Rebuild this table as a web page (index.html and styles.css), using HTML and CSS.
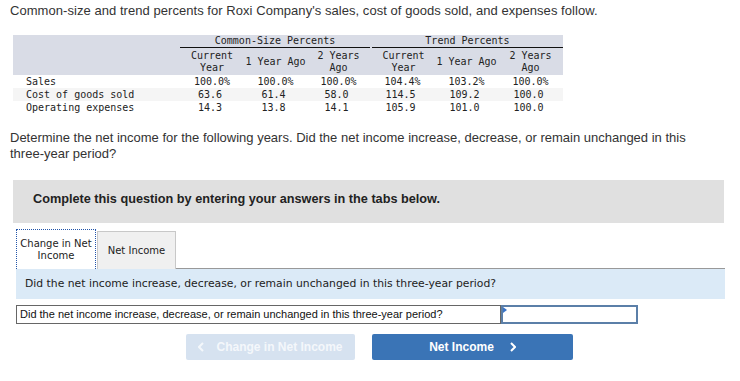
FILE: index.html
```html
<!DOCTYPE html>
<html>
<head>
<meta charset="utf-8">
<link rel="stylesheet" href="styles.css">
</head>
<body>
<div class="page">
  <p class="intro">Common-size and trend percents for Roxi Company's sales, cost of goods sold, and expenses follow.</p>

  <table class="data">
    <thead>
      <tr class="groups">
        <th class="label"></th>
        <th colspan="3"><div class="group first">Common-Size Percents</div></th>
        <th colspan="3"><div class="group second">Trend Percents</div></th>
      </tr>
      <tr class="cols">
        <th class="label"></th>
        <th class="c1">Current<br>Year</th>
        <th class="c2">1 Year Ago</th>
        <th class="c3">2 Years<br>Ago</th>
        <th class="c4">Current<br>Year</th>
        <th class="c5">1 Year Ago</th>
        <th class="c6">2 Years<br>Ago</th>
      </tr>
    </thead>
    <tbody>
      <tr>
        <td class="label">Sales</td>
        <td>100.0%</td><td>100.0%</td><td>100.0%</td>
        <td>104.4%</td><td>103.2%</td><td>100.0%</td>
      </tr>
      <tr class="stripe">
        <td class="label">Cost of goods sold</td>
        <td class="n">63.6</td><td class="n">61.4</td><td class="n">58.0</td>
        <td class="n">114.5</td><td class="n">109.2</td><td class="n">100.0</td>
      </tr>
      <tr>
        <td class="label">Operating expenses</td>
        <td class="n">14.3</td><td class="n">13.8</td><td class="n">14.1</td>
        <td class="n">105.9</td><td class="n">101.0</td><td class="n">100.0</td>
      </tr>
    </tbody>
  </table>

  <p class="question">Determine the net income for the following years. Did the net income increase, decrease, or remain unchanged in this three-year period?</p>

  <div class="notice">Complete this question by entering your answers in the tabs below.</div>

  <div class="tabs">
    <div class="tab active">Change in Net<br>Income</div>
    <div class="tab">Net Income</div>
    <div class="tab-rest"></div>
  </div>

  <div class="band">Did the net income increase, decrease, or remain unchanged in this three-year period?</div>

  <div class="answer-row">
    <div class="answer-label">Did the net income increase, decrease, or remain unchanged in this three-year period?</div>
    <div class="answer-input"><span class="flag"></span></div>
  </div>

  <div class="nav">
    <div class="btn prev"><svg class="chev" width="6" height="10" viewBox="0 0 6 10"><polyline points="5,1 1,5 5,9" fill="none" stroke="currentColor" stroke-width="2"/></svg>Change in Net Income</div>
    <div class="btn next">Net Income<svg class="chev" width="6" height="10" viewBox="0 0 6 10"><polyline points="1,1 5,5 1,9" fill="none" stroke="currentColor" stroke-width="2"/></svg></div>
  </div>
</div>
</body>
</html>
```

FILE: styles.css
```css
* { box-sizing: border-box; }
html, body { margin: 0; padding: 0; background: #fff; }
body { font-family: "Liberation Sans", Arial, sans-serif; color: #222; }

.page { padding: 3px 10px 0 10px; width: 740px; }

.intro { margin: 0; font-size: 13px; line-height: 16px; color: #333; letter-spacing: 0.05px; }

.data {
  margin: 16px 0 0 3px;
  border-collapse: collapse;
  font-family: "DejaVu Sans Mono", monospace;
  font-size: 10px;
  color: #222;
}
.data th, .data td { padding: 0; font-weight: normal; white-space: nowrap; }
.data thead tr { background: #d9dce6; }
.data .groups th { height: 13px; line-height: 12px; vertical-align: bottom; }
.data .group { border-bottom: 1px solid #111; text-align: center; }
.data .group.second { margin-left: 2px; }
.data .cols th { height: 27px; line-height: 12px; text-align: center; vertical-align: middle; padding-top: 1px; }
.data th.label, .data td.label { width: 167px; text-align: left; padding-left: 13px; }
.data .c1 { width: 64px; }
.data .c2 { width: 63px; }
.data .c3 { width: 63px; }
.data .c4 { width: 65px; padding-left: 2px !important; }
.data .c5 { width: 63px; }
.data .c6 { width: 65px; }
.data tbody td { height: 13px; line-height: 13px; text-align: center; }
.data tbody td.n { padding-right: 4px; }
.data tbody tr.stripe { background: #f5f5f5; }

.question { margin: 16px 0 0 0; font-size: 13px; line-height: 16px; color: #333; width: 710px; }

.notice {
  margin: 18px 0 0 3px;
  width: 711px;
  height: 43px;
  background: #e0e0e0;
  font-weight: bold;
  font-size: 12.7px;
  color: #222;
  padding: 12px 0 0 20px;
}

.tabs { display: flex; align-items: flex-end; margin: 6px 0 0 6px; width: 709px; }
.tab {
  font-family: "DejaVu Sans", Verdana, sans-serif;
  font-size: 10px;
  line-height: 12px;
  color: #222;
  text-align: center;
  display: flex;
  align-items: center;
  justify-content: center;
}
.tab.active {
  width: 80px;
  height: 40px;
  background: #fff;
  border: 1px dotted #2255aa;
  border-bottom: none;
}
.tab:not(.active) {
  width: 79px;
  height: 38px;
  background: #f0f0f0;
  border: 1px solid #c8c8c8;
  border-bottom: none;
  margin-left: 1px;
}
.tab-rest { flex: 1; border-bottom: 1px solid #999; }

.band {
  margin-left: 6px;
  width: 709px;
  height: 30px;
  background: #dbeaf7;
  font-family: "DejaVu Sans", Verdana, sans-serif;
  font-size: 10.8px;
  line-height: 30px;
  padding-left: 9px;
  color: #222;
}

.answer-row { display: flex; margin: 6px 0 0 6px; height: 19px; }
.answer-label {
  width: 485px;
  border: 1px solid #666;
  font-size: 11px;
  line-height: 17px;
  padding-left: 3px;
  color: #111;
}
.answer-input {
  position: relative;
  width: 137px;
  border: 2px solid #5b7fa8;
  background: #fff;
}
.flag {
  position: absolute;
  left: 0; top: 0;
  width: 0; height: 0;
  border-top: 3px solid transparent;
  border-bottom: 3px solid transparent;
  border-left: 4px solid #3a74c8;
}

.nav { display: flex; margin: 10px 0 0 176px; gap: 17px; }
.btn {
  height: 26px;
  border-radius: 2px;
  font-size: 12px;
  font-weight: bold;
  color: #fff;
  display: flex;
  align-items: center;
  justify-content: center;
}
.btn.prev { width: 169px; background: #d6e2f0; color: #f4f7fb; }
.btn.next { width: 201px; background: #3a74b6; }
.btn.prev .chev { margin-right: 12px; }
.btn.next .chev { margin-left: 16px; }
```
